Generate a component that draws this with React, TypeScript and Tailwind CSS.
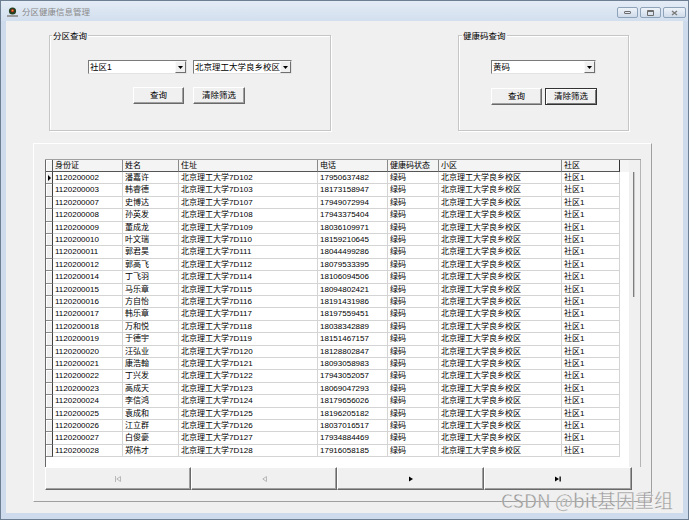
import React from 'react';

// id, 姓名, 住址 suffix, 电话
const rows: [string, string, string, string][] = [
  ['1120200002', '潘嘉许', '102', '17950637482'],
  ['1120200003', '韩睿德', '103', '18173158947'],
  ['1120200007', '史博达', '107', '17949072994'],
  ['1120200008', '孙英发', '108', '17943375404'],
  ['1120200009', '董成龙', '109', '18036109971'],
  ['1120200010', '叶文瑞', '110', '18159210645'],
  ['1120200011', '郭君昊', '111', '18044499286'],
  ['1120200012', '郭高飞', '112', '18079533395'],
  ['1120200014', '丁飞羽', '114', '18106094506'],
  ['1120200015', '马乐章', '115', '18094802421'],
  ['1120200016', '方自怡', '116', '18191431986'],
  ['1120200017', '韩乐章', '117', '18197559451'],
  ['1120200018', '万和悦', '118', '18038342889'],
  ['1120200019', '于德宇', '119', '18151467157'],
  ['1120200020', '汪弘业', '120', '18128802847'],
  ['1120200021', '康浩翰', '121', '18093058983'],
  ['1120200022', '丁兴发', '122', '17943052057'],
  ['1120200023', '高成天', '123', '18069047293'],
  ['1120200024', '李信鸿', '124', '18179656026'],
  ['1120200025', '袁成和', '125', '18196205182'],
  ['1120200026', '江立群', '126', '18037016517'],
  ['1120200027', '白俊豪', '127', '17934884469'],
  ['1120200028', '郑伟才', '128', '17916058185'],
];

const headers = ['身份证', '姓名', '住址', '电话', '健康码状态', '小区', '社区'];

// rows are ~12.4px tall in the shot, so mix 12 and 13px rows to keep lines crisp
const tallRow = (i: number) => Math.round((i + 1) * 12.4) - Math.round(i * 12.4) > 12;

const Combo = ({ value, className }: { value: string; className: string }) => (
  <div className={`flex bg-white border border-[#7a7a7a] border-b-[#e3e3e3] border-r-[#e3e3e3] ${className}`}>
    <span className="flex-1 pl-[1px] text-[8.5px] leading-[12px] whitespace-nowrap overflow-hidden">{value}</span>
    <span className="w-[11px] flex items-center justify-center bg-[#f0f0f0] border border-[#fafafa] border-b-[#6f6f6f] border-r-[#6f6f6f]">
      <svg width="5" height="3" viewBox="0 0 5 3">
        <path d="M0 0h5L2.5 3z" fill="#000" />
      </svg>
    </span>
  </div>
);

const Btn = ({ label, className }: { label: string; className: string }) => (
  <button className={`flex items-center justify-center bg-[#f0f0f0] border text-[8.5px] leading-none ${className}`}>{label}</button>
);

const NavBtn = ({ children, className }: { children: React.ReactNode; className: string }) => (
  <div className={`flex items-center justify-center bg-[#f0f0f0] border border-white border-b-[#696969] border-r-[#696969] shadow-[inset_-1px_-1px_0_#a0a0a0] ${className}`}>{children}</div>
);

export default function App() {
  return (
    <div className="relative w-[689px] h-[520px] flex flex-col bg-[#cddbed] border border-[#6f7f93] text-black font-['Liberation_Sans','Noto_Sans_CJK_SC',sans-serif] overflow-hidden">
      {/* title bar */}
      <div className="h-[20px] flex items-start bg-gradient-to-b from-[#e4ecf6] to-[#d2dfee]">
        <svg className="ml-[6px] mt-[6px]" width="11" height="10" viewBox="0 0 11 10">
          <rect x="0" y="8" width="11" height="2" fill="#9a9a9a" />
          <circle cx="5.5" cy="4" r="3.6" fill="#24401f" />
          <circle cx="5.5" cy="3.6" r="1.6" fill="#c8321e" />
          <circle cx="5.5" cy="3.6" r="0.7" fill="#e9c04a" />
        </svg>
        <span className="ml-[4px] mt-[5px] text-[8.5px] leading-[12px] text-[#8a8a8a]">分区健康信息管理</span>
        <div className="ml-auto mr-[2px] mt-[6px] flex gap-[2px]">
          <div className="w-[21px] h-[11px] rounded-[2px] border border-[#8ea2ba] bg-gradient-to-b from-[#eef3f9] to-[#cfdbea] flex items-center justify-center">
            <div className="w-[7px] h-[3px] border border-[#6d6d6d] rounded-[1px]" />
          </div>
          <div className="w-[21px] h-[11px] rounded-[2px] border border-[#8ea2ba] bg-gradient-to-b from-[#eef3f9] to-[#cfdbea] flex items-center justify-center">
            <div className="w-[7px] h-[6px] border border-[#6d6d6d] border-t-2 rounded-[1px]" />
          </div>
          <div className="w-[23px] h-[11px] rounded-[2px] border border-[#8ea2ba] bg-gradient-to-b from-[#eef3f9] to-[#cfdbea] flex items-center justify-center">
            <svg width="7" height="6" viewBox="0 0 7 6">
              <path d="M1 1l5 4M6 1L1 5" stroke="#7a7a7a" strokeWidth="1.4" />
            </svg>
          </div>
        </div>
      </div>

      {/* client area */}
      <div className="mx-[5px] mb-[6px] flex-1 bg-[#f0f0f0] flex flex-col text-[8px] leading-none">
        <div className="flex pl-[43px] pt-[14px]">
          {/* 分区查询 */}
          <div className="relative w-[282px] h-[96px] border border-[#c6c6c6] shadow-[inset_1px_1px_0_#fff,1px_1px_0_#fff]">
            <span className="absolute left-[2px] -top-[6px] px-[1px] bg-[#f0f0f0] text-[8.5px] leading-[12px]">分区查询</span>
            <div className="flex gap-[6px] pl-[38px] pt-[24px]">
              <Combo value="社区1" className="w-[99px] h-[14px]" />
              <Combo value="北京理工大学良乡校区" className="w-[99px] h-[14px]" />
            </div>
            <div className="flex gap-[9px] pl-[83px] mt-[13px]">
              <Btn label="查询" className="w-[51px] h-[17px] border-white border-b-[#696969] border-r-[#696969] shadow-[inset_-1px_-1px_0_#a0a0a0]" />
              <Btn label="清除筛选" className="w-[52px] h-[17px] border-white border-b-[#696969] border-r-[#696969] shadow-[inset_-1px_-1px_0_#a0a0a0]" />
            </div>
          </div>

          {/* 健康码查询 */}
          <div className="relative ml-[127px] w-[171px] h-[96px] border border-[#c6c6c6] shadow-[inset_1px_1px_0_#fff,1px_1px_0_#fff]">
            <span className="absolute left-[3px] -top-[6px] px-[1px] bg-[#f0f0f0] text-[8.5px] leading-[12px]">健康码查询</span>
            <div className="pl-[32px] pt-[24px]">
              <Combo value="黄码" className="w-[105px] h-[14px]" />
            </div>
            <div className="flex gap-[3px] pl-[32px] mt-[14px]">
              <Btn label="查询" className="w-[51px] h-[17px] border-white border-b-[#696969] border-r-[#696969] shadow-[inset_-1px_-1px_0_#a0a0a0]" />
              <Btn label="清除筛选" className="w-[52px] h-[17px] border-[#333] shadow-[inset_1px_1px_0_#fff,inset_-1px_-1px_0_#7a7a7a]" />
            </div>
          </div>
        </div>

        {/* grid panel */}
        <div className="ml-[27px] mt-[12px] w-[619px] h-[359px] border border-white border-b-[#a0a0a0] border-r-[#a0a0a0] pl-[11px] pt-[15px]">
          <div className="w-[596px] flex flex-col">
            <div className="flex h-[308px] border-t border-[#a0a0a0]">
              <div className="w-[584px] bg-white border-l border-[#696969] flex flex-col">
                {/* header */}
                <div className="grid grid-cols-[7px_70px_56px_139px_70px_51px_123px_58px] h-[12px] bg-[#f4f4f4]">
                  <div className="border-r border-b border-[#555] shadow-[inset_1px_1px_0_#fff]" />
                  {headers.map((h, i) => (
                    <div
                      key={h}
                      className={`pl-[2px] flex items-center whitespace-nowrap border-b border-b-[#555] border-r ${i === headers.length - 1 ? 'border-r-[#333]' : 'border-r-[#8a8a8a]'}`}
                    >
                      {h}
                    </div>
                  ))}
                </div>
                {/* rows */}
                {rows.map((r, idx) => (
                  <div key={r[0]} className={`grid grid-cols-[7px_70px_56px_139px_70px_51px_123px_58px] ${tallRow(idx) ? 'h-[13px]' : 'h-[12px]'}`}>
                    <div className="bg-[#f0f0f0] border-r border-b border-r-[#404040] border-b-[#8a8a8a] shadow-[inset_1px_1px_0_#fff] flex items-center justify-center">
                      {idx === 0 && (
                        <svg width="3" height="6" viewBox="0 0 3 6">
                          <path d="M0 0l3 3-3 3z" fill="#000" />
                        </svg>
                      )}
                    </div>
                    <div className="pl-[2px] flex items-center border-r border-b border-[#d4d4d4] whitespace-nowrap overflow-hidden">{r[0]}</div>
                    <div className="pl-[2px] flex items-center border-r border-b border-[#d4d4d4] whitespace-nowrap overflow-hidden">{r[1]}</div>
                    <div className="pl-[2px] flex items-center border-r border-b border-[#d4d4d4] whitespace-nowrap overflow-hidden">北京理工大学7D{r[2]}</div>
                    <div className="pl-[2px] flex items-center border-r border-b border-[#d4d4d4] whitespace-nowrap overflow-hidden">{r[3]}</div>
                    <div className="pl-[2px] flex items-center border-r border-b border-[#d4d4d4] whitespace-nowrap overflow-hidden">绿码</div>
                    <div className="pl-[2px] flex items-center border-r border-b border-[#d4d4d4] whitespace-nowrap overflow-hidden">北京理工大学良乡校区</div>
                    <div className="pl-[2px] flex items-center border-r border-b border-[#d4d4d4] whitespace-nowrap overflow-hidden">社区1</div>
                  </div>
                ))}
              </div>
              {/* scroll strip */}
              <div className="w-[12px] border-r border-[#b4b4b4] pl-[4px] pt-[12px]">
                <div className="w-[2px] h-[125px] bg-[#7d7d7d] border-r border-[#c8c8c8]" />
              </div>
            </div>

            {/* navigator */}
            <div className="flex h-[23px] w-[587px]">
              <NavBtn className="w-[146px]">
                <svg width="6" height="6" viewBox="0 0 6 6">
                  <path d="M0.5 0v6M5.5 0.5L1.8 3l3.7 2.5z" stroke="#b8b8b8" fill="none" strokeWidth="1" />
                </svg>
              </NavBtn>
              <NavBtn className="w-[146px]">
                <svg width="5" height="6" viewBox="0 0 5 6">
                  <path d="M4.5 0.5L0.8 3l3.7 2.5z" stroke="#b8b8b8" fill="none" strokeWidth="1" />
                </svg>
              </NavBtn>
              <NavBtn className="w-[147px]">
                <svg width="4" height="6" viewBox="0 0 4 6">
                  <path d="M0 0.5l4 2.5-4 2.5z" fill="#000" />
                </svg>
              </NavBtn>
              <NavBtn className="w-[148px]">
                <svg width="6" height="6" viewBox="0 0 6 6">
                  <path d="M0 0.5l4 2.5-4 2.5z" fill="#000" />
                  <rect x="4.5" y="0.5" width="1.3" height="5" fill="#000" />
                </svg>
              </NavBtn>
            </div>
          </div>
        </div>
      </div>

      {/* watermark */}
      <span className="absolute left-[500px] top-[487px] text-[19px] leading-[24px] text-[#8f8f8f] opacity-90 whitespace-nowrap font-['Noto_Sans_CJK_SC',sans-serif] [-webkit-text-stroke:0.3px_#fff]">
        CSDN @bit基因重组
      </span>
    </div>
  );
}
